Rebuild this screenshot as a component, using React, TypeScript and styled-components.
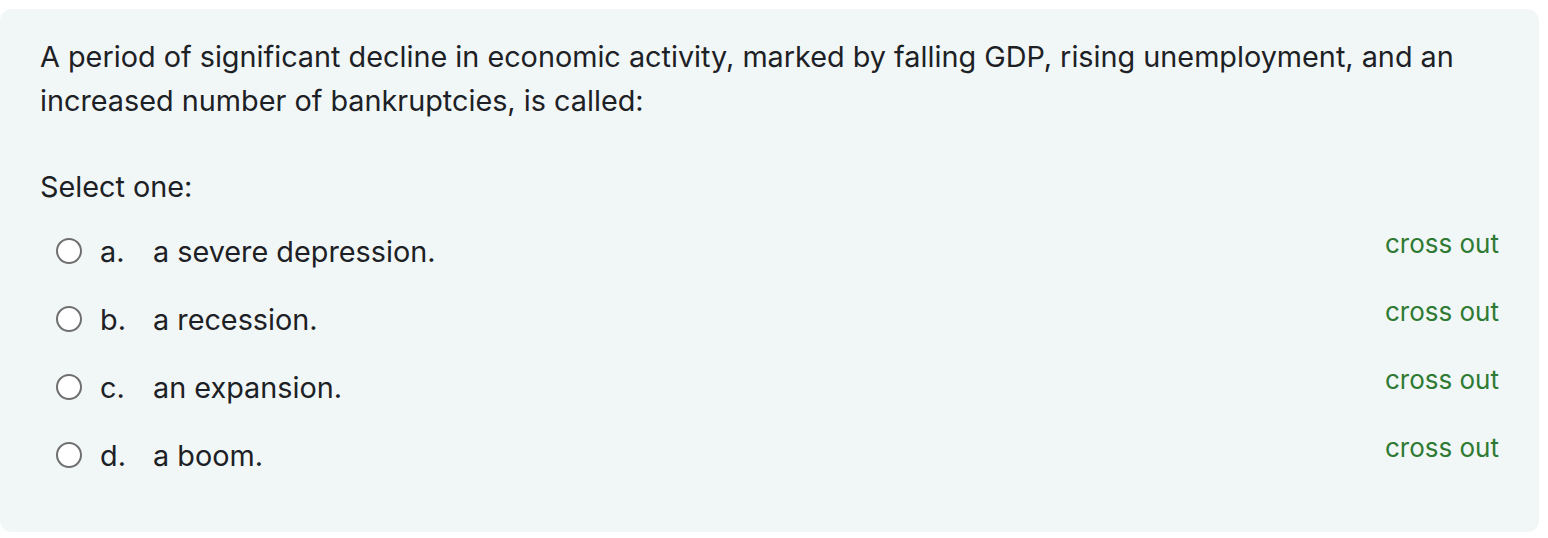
import styled, { createGlobalStyle } from "styled-components";
import React from "react";

const GlobalStyle = createGlobalStyle`
  body {
    margin: 0;
    background: #fff;
    font-family: Inter, "Noto Sans", sans-serif;
    color: #1d2125;
  }
`;

const options = [
  { letter: "a.", text: "a severe depression." },
  { letter: "b.", text: "a recession." },
  { letter: "c.", text: "an expansion." },
  { letter: "d.", text: "a boom." },
];

const App = () => {
  return (
    <>
      <GlobalStyle />
      <Card>
        <Question>
          A period of significant decline in economic activity, marked by falling GDP, rising
          unemployment, and an increased number of bankruptcies, is called:
        </Question>
        <Prompt>Select one:</Prompt>
        <OptionList>
          {options.map((el) => (
            <Option key={el.letter}>
              <Radio type="radio" name="answer" />
              <Letter>{el.letter}</Letter>
              <Answer>{el.text}</Answer>
              <CrossOut>cross out</CrossOut>
            </Option>
          ))}
        </OptionList>
      </Card>
    </>
  );
};

const Card = styled.div`
  margin: 9px 9px 0 0;
  height: 523px;
  box-sizing: border-box;
  padding: 26px 40px 0 40px;
  background-color: #f1f7f7;
  border-radius: 12px;
`;

const Question = styled.p`
  margin: 0;
  width: 1440px;
  font-size: 28.8px;
  line-height: 44px;
`;

const Prompt = styled.div`
  margin-top: 42px;
  font-size: 28.8px;
  line-height: 44px;
`;

const OptionList = styled.div`
  margin-top: 20px;
  display: flex;
  flex-direction: column;
  gap: 24px;
`;

const Option = styled.div`
  display: flex;
  align-items: center;
  height: 44px;
  padding-left: 16px;
  font-size: 28.8px;
`;

const Radio = styled.input`
  appearance: none;
  margin: 0;
  width: 26px;
  height: 26px;
  border: 2px solid #6f6f6f;
  border-radius: 50%;
  background: #fff;
  box-sizing: border-box;
  flex-shrink: 0;
`;

const Letter = styled.span`
  margin-left: 18px;
  width: 53px;
`;

const Answer = styled.span`
  flex: 1;
`;

const CrossOut = styled.span`
  align-self: flex-start;
  margin-top: -1px;
  font-size: 26px;
  color: #2f7a33;
`;

export default App;
